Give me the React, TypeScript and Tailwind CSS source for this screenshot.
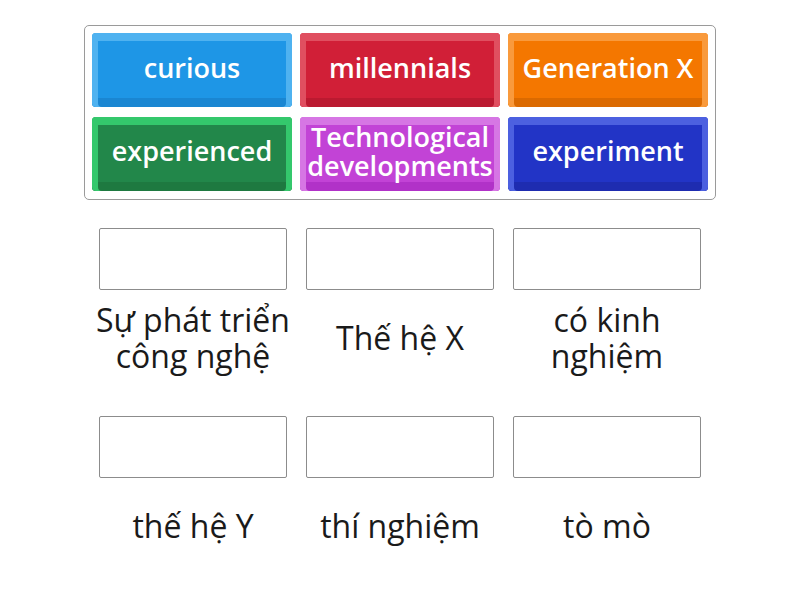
const tiles = [
  { label: 'curious', cls: 'bg-[#1e96e6] [--top:#4fb2f0] [--bot:#1a86d2]' },
  { label: 'millennials', cls: 'bg-[#d11f37] [--top:#e04f60] [--bot:#bb1a30]' },
  { label: 'Generation X', cls: 'bg-[#f47700] [--top:#f99a3c] [--bot:#db6a00]' },
  { label: 'experienced', cls: 'bg-[#22874a] [--top:#34c86c] [--bot:#1e7940]' },
  { label: 'Technological developments', cls: 'bg-[#c243d6] [--top:#d676e4] [--bot:#b132c8]' },
  { label: 'experiment', cls: 'bg-[#2234c6] [--top:#4c60e0] [--bot:#1e2cb0]' },
];

const targets = [
  ['Sự phát triển công nghệ', 'Thế hệ X', 'có kinh nghiệm'],
  ['thế hệ Y', 'thí nghiệm', 'tò mò'],
];

function Tile({ label, cls }: { label: string; cls: string }) {
  return (
    <div
      className={`${cls} h-[74px] rounded-[4px] flex items-center justify-center text-center text-white font-semibold text-[27px] leading-[29px] shadow-[inset_0_8px_0_var(--top),inset_6px_0_0_var(--top),inset_-6px_0_0_var(--top),inset_0_-9px_0_var(--bot)]`}
    >
      <span className="pb-[6px]">{label}</span>
    </div>
  );
}

export default function App() {
  return (
    <div className="w-[800px] h-[600px] bg-white pt-[25px]" style={{ fontFamily: '"Open Sans", "Noto Sans", sans-serif' }}>
      <div className="mx-auto w-[632px] h-[175px] border border-[#9a9a9a] rounded-[5px] p-[7px] grid grid-cols-3 gap-[8px]">
        {tiles.map(t => (
          <Tile key={t.label} label={t.label} cls={t.cls} />
        ))}
      </div>

      <div className="mx-auto w-[602px] mt-[28px] flex flex-col gap-[30px]">
        {targets.map((row, i) => (
          <div key={i} className="grid grid-cols-3 gap-[19px]">
            {row.map(text => (
              <div key={text} className="flex flex-col">
                <div className="h-[62px] border border-[#8c8c8c] rounded-[2px] bg-white" />
                <div className="h-[96px] -mx-[8px] flex items-center justify-center text-center text-[32px] leading-[36px] text-[#1a1a1a]">
                  {text}
                </div>
              </div>
            ))}
          </div>
        ))}
      </div>
    </div>
  );
}
